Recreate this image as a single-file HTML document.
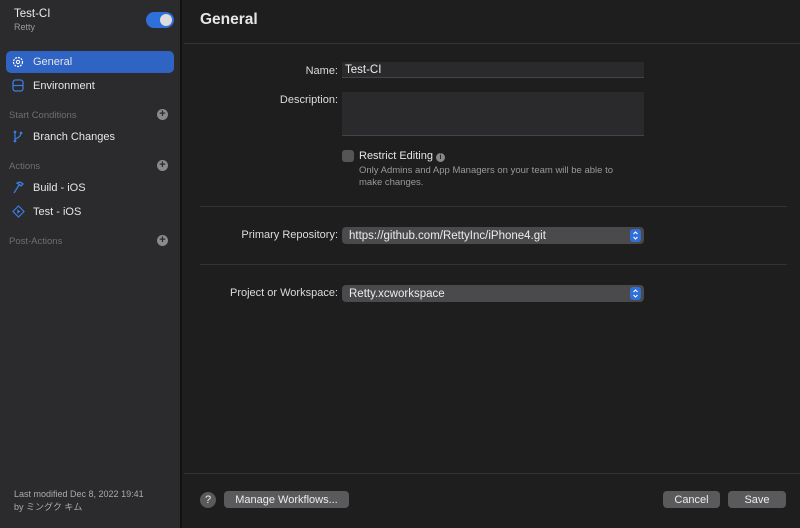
<!DOCTYPE html>
<html><head><meta charset="utf-8"><style>
*{margin:0;padding:0;box-sizing:border-box}
body{width:800px;height:528px;background:#1e1e1e;font-family:"Liberation Sans","Noto Sans CJK JP",sans-serif;color:#dcdcdc;position:relative;overflow:hidden;font-size:11px}
.sb{position:absolute;left:0;top:0;width:182px;height:528px;background:#2b2b2d;border-right:2px solid #111}
.main{position:absolute;left:184px;top:0;right:0;bottom:0;background:#1e1e1e}
.abs{position:absolute}
.item{position:absolute;left:6px;width:168px;height:22px;border-radius:5px;font-size:11px;color:#e6e6e6;line-height:23px;padding-left:27px}
.sec{position:absolute;left:9px;font-size:9.5px;color:#6e6e70}
.plus{position:absolute;left:157px;width:11px;height:11px;border-radius:50%;background:#8a8a8c;color:#2b2b2d;font-size:11px;line-height:11px;text-align:center;font-weight:bold}
.lbl{position:absolute;font-size:11px;color:#dcdcdc;text-align:right;width:150px}
.sel{position:absolute;left:342px;width:302px;height:17px;background:#4a4a4c;border-radius:4px;font-size:11.5px;line-height:18px;padding-left:7px;color:#ececec}
.sel svg{position:absolute;right:3px;top:2px}
.btn{position:absolute;height:17px;background:#5a5a5c;border-radius:4px;font-size:11px;line-height:18px;text-align:center;color:#ececec}
.hr{position:absolute;left:200px;width:587px;height:1px;background:#333335}
</style></head><body>
<div class="sb">
 <div class="abs" style="left:14px;top:8px;font-size:11.5px;color:#ececec">Test-CI</div>
 <div class="abs" style="left:14px;top:22px;font-size:9px;color:#9a9a9c">Retty</div>
 <div class="abs" style="left:146px;top:12px;width:28px;height:16px;border-radius:8px;background:#2f6fd9"><div style="position:absolute;right:2px;top:2px;width:12px;height:12px;border-radius:50%;background:#ddd"></div></div>
 <div class="item" style="top:51px;background:#2f63c4">General</div>
 <svg class="abs" style="left:12px;top:56px" width="12" height="12" viewBox="0 0 12 12"><circle cx="6" cy="6" r="4.5" fill="none" stroke="#fff" stroke-width="1.2" stroke-dasharray="2 1"/><circle cx="6" cy="6" r="1.6" fill="none" stroke="#fff" stroke-width="1"/></svg>
 <div class="item" style="top:75px">Environment</div>
 <svg class="abs" style="left:12px;top:79px" width="12" height="13" viewBox="0 0 12 13"><rect x="1" y="1" width="10" height="11" rx="2.5" fill="none" stroke="#3d7be0" stroke-width="1.3"/><line x1="1" y1="6.5" x2="11" y2="6.5" stroke="#3d7be0" stroke-width="1.2"/></svg>
 <div class="sec" style="top:110px">Start Conditions</div><div class="plus" style="top:109px">+</div>
 <div class="item" style="top:126px">Branch Changes</div>
 <svg class="abs" style="left:12px;top:130px" width="12" height="13" viewBox="0 0 12 13"><circle cx="3" cy="2" r="1.4" fill="#3d7be0"/><circle cx="3" cy="11" r="1.4" fill="#3d7be0"/><circle cx="9" cy="3" r="1.4" fill="#3d7be0"/><path d="M3 2V11M9 3Q9 7 3 9" stroke="#3d7be0" stroke-width="1.2" fill="none"/></svg>
 <div class="sec" style="top:161px">Actions</div><div class="plus" style="top:160px">+</div>
 <div class="item" style="top:177px">Build - iOS</div>
 <svg class="abs" style="left:12px;top:181px" width="13" height="13" viewBox="0 0 13 13"><path d="M2 12L7 4M5 2Q8 0 11 3L9 5Q7 3 5 2Z" stroke="#3d7be0" stroke-width="1.3" fill="none"/></svg>
 <div class="item" style="top:201px">Test - iOS</div>
 <svg class="abs" style="left:12px;top:205px" width="13" height="13" viewBox="0 0 13 13"><path d="M6.5 1L12 6.5 6.5 12 1 6.5Z" stroke="#3d7be0" stroke-width="1.2" fill="none"/><path d="M5.3 4.3L8.5 6.5 5.3 8.7Z" fill="#3d7be0"/></svg>
 <div class="sec" style="top:236px">Post-Actions</div><div class="plus" style="top:235px">+</div>
 <div class="abs" style="left:14px;top:489px;font-size:9px;color:#aaa">Last modified Dec 8, 2022 19:41</div>
 <div class="abs" style="left:14px;top:500px;font-size:9px;color:#aaa">by ミングク キム</div>
</div>
<div class="main">
 <div class="abs" style="left:16px;top:11px;font-size:15.5px;font-weight:bold;color:#e6e6e6">General</div>
 <div class="abs" style="left:0;right:0;top:43px;height:1px;background:#333335"></div>
 <div class="abs" style="left:0;right:0;top:473px;height:1px;background:#333335"></div>
</div>
<div class="lbl" style="left:188px;top:65px">Name:</div>
<div class="abs" style="left:342px;top:62px;width:302px;height:16px;background:#2a2a2c;border-bottom:1px solid #444;font-size:11.5px;line-height:16px;padding-left:3px;color:#ececec">Test-CI</div>
<div class="lbl" style="left:188px;top:94px">Description:</div>
<div class="abs" style="left:342px;top:92px;width:302px;height:44px;background:#2a2a2c;border-bottom:1px solid #444"></div>
<div class="abs" style="left:342px;top:150px;width:12px;height:12px;border-radius:3px;background:#555"></div>
<div class="abs" style="left:359px;top:150px;font-size:11px;color:#e6e6e6">Restrict Editing <span style="display:inline-block;width:9px;height:9px;border-radius:50%;background:#888;color:#222;font-size:7px;line-height:9px;text-align:center;font-weight:bold;vertical-align:0">i</span></div>
<div class="abs" style="left:359px;top:165px;font-size:9.5px;color:#999;line-height:12px">Only Admins and App Managers on your team will be able to<br>make changes.</div>
<div class="hr" style="top:206px"></div>
<div class="lbl" style="left:188px;top:229px">Primary Repository:</div>
<div class="sel" style="top:227px">https://github.com/RettyInc/iPhone4.git<svg width="11" height="13" viewBox="0 0 11 13"><rect width="11" height="13" rx="3" fill="#2f6fd9"/><path d="M3.5 5L5.5 3 7.5 5M3.5 8L5.5 10 7.5 8" stroke="#fff" stroke-width="1.1" fill="none"/></svg></div>
<div class="hr" style="top:264px"></div>
<div class="lbl" style="left:188px;top:287px">Project or Workspace:</div>
<div class="sel" style="top:285px">Retty.xcworkspace<svg width="11" height="13" viewBox="0 0 11 13"><rect width="11" height="13" rx="3" fill="#2f6fd9"/><path d="M3.5 5L5.5 3 7.5 5M3.5 8L5.5 10 7.5 8" stroke="#fff" stroke-width="1.1" fill="none"/></svg></div>
<div class="abs" style="left:200px;top:492px;width:16px;height:16px;border-radius:50%;background:#5a5a5c;color:#eee;font-size:11px;line-height:16px;text-align:center">?</div>
<div class="btn" style="left:224px;top:491px;width:125px">Manage Workflows...</div>
<div class="btn" style="left:663px;top:491px;width:57px">Cancel</div>
<div class="btn" style="left:728px;top:491px;width:58px">Save</div>
</body></html>
